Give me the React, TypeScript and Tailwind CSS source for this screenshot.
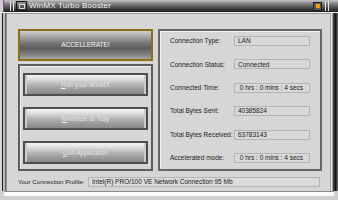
import React from 'react'

const font = { fontFamily: '"Liberation Sans", Arial, sans-serif' }

function ChromeButton({ label, first }: { label: string; first: string }) {
  return (
    <div className="h-[23px] border-2 border-[#4e4e4e] bg-[linear-gradient(to_bottom,#f6f6f6,#dadada_25%,#b6b6b6_50%,#9c9c9c_75%,#888888)] shadow-[inset_2px_0_0_#cacaca,inset_-2px_0_0_#cacaca] flex items-center justify-center">
      <span className="text-[6.5px] text-[#eeeeee] [text-shadow:0_0_1px_#9a9a9a]">
        <span className="underline">{first}</span>
        {label}
      </span>
    </div>
  )
}

function StatRow({ label, value }: { label: string; value: string }) {
  return (
    <div className="h-[10px] flex items-center">
      <span className="w-[64px] text-[6.5px] text-[#1a1a1a] whitespace-nowrap">{label}</span>
      <div className="w-[76px] h-[10px] border border-[#b4b4b4] bg-[#d8d8d8] flex items-center pl-[3px] text-[6.5px] text-[#1a1a1a] whitespace-nowrap">
        {value}
      </div>
    </div>
  )
}

export default function App() {
  const stats = [
    ['Connection Type:', 'LAN'],
    ['Connection Status:', 'Connected'],
    ['Connected Time:', '\u00a00 hrs :  0 mins :  4 secs'],
    ['Total Bytes Sent:', '40385824'],
    ['Total Bytes Received:', '63783143'],
    ['Accelerated mode:', '\u00a00 hrs :  0 mins :  4 secs'],
  ]

  return (
    <div className="w-[338px] h-[200px] bg-[#cfcfcf] flex flex-col overflow-hidden" style={font}>
      {/* title bar */}
      <div className="h-[13px] flex items-center bg-[linear-gradient(to_bottom,#c4c4c4,#7a7a7a_35%,#3c3c3c_75%,#1e1e1e)] border-b border-[#f0f0f0]">
        <div className="w-[4px] h-full bg-[#cfcfcf] border-r border-[#8a3c9a]" />
        <div className="flex gap-[2px] ml-[6px] h-[10px]">
          <div className="w-[1px] bg-[#e8e8e8]" />
          <div className="w-[1px] bg-[#e8e8e8]" />
        </div>
        <div className="ml-[2px] w-[11px] h-[10px] border border-[#111] bg-[linear-gradient(to_bottom,#9a9a9a,#333)] flex items-center justify-center">
          <div className="w-[6px] h-[5px] bg-[#555] border border-[#ddd]" />
        </div>
        <span className="ml-[2px] text-[8px] leading-none text-[#f2f2f2] tracking-[0.2px]">WinMX Turbo Booster</span>
        <div className="flex-1" />
        <div className="w-[9px] h-[9px] border border-[#222] bg-[#5a5a5a] flex items-center justify-center">
          <div className="w-[4px] h-[4px] bg-[#f5a000]" />
        </div>
        <div className="flex gap-[2px] ml-[3px] mr-[9px] h-[10px]">
          <div className="w-[1px] bg-[#e8e8e8]" />
          <div className="w-[1px] bg-[#e8e8e8]" />
        </div>
      </div>

      {/* body */}
      <div className="flex-1 flex">
        <div className="w-[7px] bg-[linear-gradient(to_right,#d4d4d4_0%,#d4d4d4_25%,#1a1a1a_35%,#f2f2f2_55%,#5a5a5a_80%,#b0b0b0_100%)]" />
        <div className="flex-1 flex flex-col pl-[11px] pt-[15px] bg-[#d6d6d6] border-t border-[#9a9a9a]">
          <div className="flex gap-[5px]">
            <div className="w-[135px] flex flex-col gap-[3px]">
              <div className="h-[32px] border-2 border-[#8c6e14] bg-[linear-gradient(to_bottom,#d0d0d0,#a2a2a2_22%,#747474_45%,#5c5c5c_62%,#828282_85%,#a8a8a8)] flex items-center justify-center">
                <span className="text-[6.5px] text-[#f4f4f4]">ACCELLERATE!</span>
              </div>
              <div className="h-[107px] border-2 border-[#5c5c5c] shadow-[inset_1px_1px_0_#f4f4f4] flex flex-col gap-[11px] pt-[7px] px-[3px]">
                <ChromeButton first="R" label="un your WinMX" />
                <ChromeButton first="M" label="inimize to Tray" />
                <ChromeButton first="Q" label="uit Application" />
              </div>
            </div>
            <div className="w-[164px] h-[142px] border-2 border-[#666] shadow-[inset_1px_1px_0_#f4f4f4] flex flex-col justify-between pt-[5px] pb-[6px] pl-[10px]">
              {stats.map(([l, v]) => (
                <StatRow key={l} label={l} value={v} />
              ))}
            </div>
          </div>
          <div className="mt-[6px] h-[10px] flex items-center">
            <span className="w-[70px] text-[6.2px] text-[#1a1a1a] whitespace-nowrap">Your Connection Profile:</span>
            <div className="w-[232px] h-[10px] border border-[#b4b4b4] bg-[#dadada] flex items-center pl-[3px] text-[6.5px] text-[#1a1a1a] whitespace-nowrap">
              Intel(R) PRO/100 VE Network Connection 95 Mb
            </div>
          </div>
        </div>
        <div className="w-[8px] bg-[linear-gradient(to_right,#8a8a8a_0%,#f0f0f0_20%,#3a3a3a_45%,#111_70%,#7a7a7a_100%)]" />
      </div>

      {/* bottom edge */}
      <div className="h-[5px] mx-[4px] bg-[#fbfbfb] border-t border-[#8a8a8a]" />
      <div className="h-[4px] bg-[#cfcfcf]" />
    </div>
  )
}
